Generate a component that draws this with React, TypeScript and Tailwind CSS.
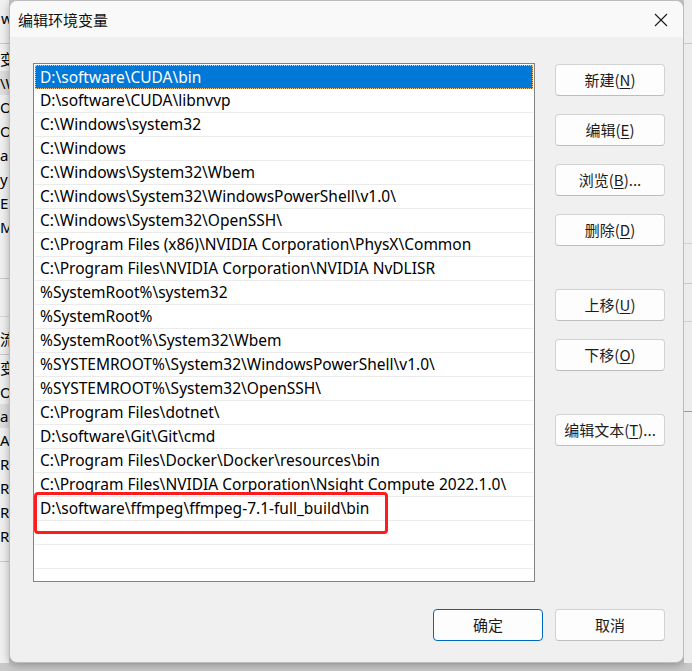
import React from "react";

const paths = [
  "D:\\software\\CUDA\\bin",
  "D:\\software\\CUDA\\libnvvp",
  "C:\\Windows\\system32",
  "C:\\Windows",
  "C:\\Windows\\System32\\Wbem",
  "C:\\Windows\\System32\\WindowsPowerShell\\v1.0\\",
  "C:\\Windows\\System32\\OpenSSH\\",
  "C:\\Program Files (x86)\\NVIDIA Corporation\\PhysX\\Common",
  "C:\\Program Files\\NVIDIA Corporation\\NVIDIA NvDLISR",
  "%SystemRoot%\\system32",
  "%SystemRoot%",
  "%SystemRoot%\\System32\\Wbem",
  "%SYSTEMROOT%\\System32\\WindowsPowerShell\\v1.0\\",
  "%SYSTEMROOT%\\System32\\OpenSSH\\",
  "C:\\Program Files\\dotnet\\",
  "D:\\software\\Git\\Git\\cmd",
  "C:\\Program Files\\Docker\\Docker\\resources\\bin",
  "C:\\Program Files\\NVIDIA Corporation\\Nsight Compute 2022.1.0\\",
  "D:\\software\\ffmpeg\\ffmpeg-7.1-full_build\\bin",
  "",
  "",
  "",
];

// 后面窗口露出来的一点点
const behindTop = ["变量", "\\W", "Or", "Or", "a", "y", "E", "M"];
const behindBottom = ["变量", "OS", "a", "A", "R", "R", "R", "R"];

function Btn({
  label,
  hot,
  tail = "",
  primary = false,
}: {
  label: string;
  hot?: string;
  tail?: string;
  primary?: boolean;
}) {
  return (
    <div
      className={
        "h-[32px] w-[110px] flex items-center justify-center rounded-[4px] bg-[#fdfdfd] text-[15px] text-[#1b1b1b] " +
        (primary
          ? "border border-[#0067c0] shadow-[inset_0_0_0_1px_#ffffff]"
          : "border border-[#d2d2d2] border-b-[#bcbcbc]")
      }
    >
      <span>
        {label}
        {hot && (
          <>
            (<span className="underline underline-offset-2">{hot}</span>)
          </>
        )}
        {tail}
      </span>
    </div>
  );
}

export default function App() {
  return (
    <div
      className="w-[692px] h-[671px] overflow-hidden flex bg-[#c9c9c9] text-black"
      style={{ fontFamily: '"Noto Sans", "Noto Sans CJK SC", sans-serif' }}
    >
      {/* 左边背景窗口 */}
      <div className="w-[9px] shrink-0 h-[663px] bg-[#f0f0f0] overflow-hidden text-[15px] leading-[24px] whitespace-nowrap">
        <div className="h-[44px] pt-[6px] pl-[1px] border-b border-[#c8c8c8]">w</div>
        <div className="pt-[3px]">
          {behindTop.map((t, i) => (
            <div key={i} className={i === 1 ? "h-[24px] bg-[#dedede]" : "h-[24px]"}>
              {t}
            </div>
          ))}
        </div>
        <div className="h-[40px] border-b border-[#c8c8c8]" />
        <div className="h-[38px] border-b border-[#d8d8d8]" />
        <div className="h-[38px] pt-[10px] border-b border-[#c8c8c8]">流</div>
        <div className="pt-[1px]">
          {behindBottom.map((t, i) => (
            <div key={i} className={i === 2 ? "h-[24px] bg-[#dedede]" : "h-[24px]"}>
              {t}
            </div>
          ))}
        </div>
        <div className="h-[14px] border-b border-[#c8c8c8]" />
      </div>

      {/* 对话框 */}
      <div className="w-[675px] shrink-0 h-[663px] flex flex-col rounded-[8px] border border-[#bdbdbd] bg-[#f0f0f0] shadow-[0_2px_8px_rgba(0,0,0,0.3)] overflow-hidden">
        <div className="h-[36px] shrink-0 bg-[#f9f9f9] flex items-center justify-between pl-[8px] pr-[15px]">
          <span className="text-[15px] text-[#111] pt-[2px]" style={{ fontFamily: '"Noto Sans CJK SC", sans-serif' }}>
            编辑环境变量
          </span>
          <svg width="14" height="14" viewBox="0 0 14 14" className="mt-[2px]">
            <path d="M1 1 L13 13 M13 1 L1 13" stroke="#1a1a1a" strokeWidth="1.1" fill="none" />
          </svg>
        </div>

        <div className="flex pl-[23px] pt-[26px]">
          <div className="relative w-[502px] h-[519px] shrink-0 border border-[#838383] bg-white p-px overflow-hidden">
            {paths.map((p, i) =>
              i === 0 ? (
                <div
                  key={i}
                  className="h-[24px] flex items-center pl-[5px] pt-px bg-[#0078d7] text-white text-[15.5px] outline outline-1 outline-dotted outline-[#f7c07a] -outline-offset-1"
                >
                  {p}
                </div>
              ) : (
                <div
                  key={i}
                  className="h-[24px] flex items-center pl-[5px] pt-px border-b border-[#ebebeb] text-[15.5px]"
                >
                  {p}
                </div>
              )
            )}
            {/* 红框标注 */}
            <div className="absolute left-0 top-[428px] w-[354px] h-[42px] border-[3px] border-[#ff1c1c] rounded-[4px]" />
          </div>

          <div
            className="ml-[20px] mt-px flex flex-col"
            style={{ fontFamily: '"Noto Sans CJK SC", sans-serif' }}
          >
            <div className="flex flex-col gap-[18px]">
              <Btn label="新建" hot="N" />
              <Btn label="编辑" hot="E" />
              <Btn label="浏览" hot="B" tail="..." />
              <Btn label="删除" hot="D" />
            </div>
            <div className="flex flex-col gap-[18px] mt-[43px]">
              <Btn label="上移" hot="U" />
              <Btn label="下移" hot="O" />
            </div>
            <div className="mt-[43px]">
              <Btn label="编辑文本" hot="T" tail="..." />
            </div>
          </div>
        </div>

        <div
          className="flex justify-end gap-[12px] pr-[18px] mt-[27px]"
          style={{ fontFamily: '"Noto Sans CJK SC", sans-serif' }}
        >
          <Btn label="确定" primary />
          <Btn label="取消" />
        </div>
      </div>

      {/* 右边背景窗口 */}
      <div className="flex-1 h-[663px] bg-[#ececec] flex flex-col">
        <div className="h-[44px] border-b border-[#c8c8c8]" />
        <div className="h-[200px] border-b border-[#d0d0d0]" />
        <div className="h-[40px] border-b border-[#c8c8c8]" />
        <div className="h-[38px] border-b border-[#d0d0d0]" />
        <div className="h-[90px] border-b border-[#9a9a9a]" />
      </div>
    </div>
  );
}
